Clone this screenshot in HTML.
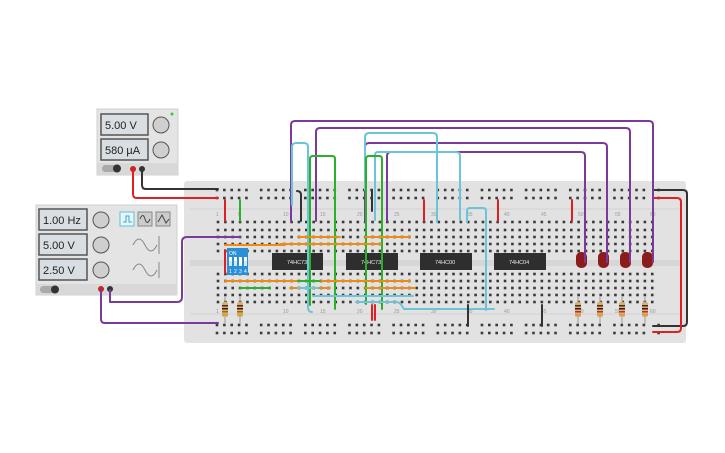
<!DOCTYPE html>
<html><head><meta charset="utf-8"><style>
html,body{margin:0;padding:0;background:#fff;width:725px;height:453px;overflow:hidden}
svg{display:block}
text{font-family:"Liberation Sans",sans-serif}
</style></head><body>
<svg id="s" width="725" height="453" viewBox="0 0 725 453" xmlns="http://www.w3.org/2000/svg">
<rect x="184" y="181" width="502" height="162" rx="3" fill="#e2e2e2"/>
<line x1="190" y1="209" x2="680" y2="209" stroke="#d2d2d2"/>
<line x1="190" y1="314" x2="680" y2="314" stroke="#d2d2d2"/>
<rect x="190" y="260" width="490" height="6" fill="#d6d6d6"/>
<g id="holes" fill="#3a3a3a"></g>
<g font-size="5" fill="#999">
<text x="216" y="216">1</text><text x="238" y="216">5</text><text x="283" y="216">10</text><text x="320" y="216">15</text><text x="357" y="216">20</text><text x="394" y="216">25</text><text x="431" y="216">30</text><text x="467" y="216">35</text><text x="504" y="216">40</text><text x="541" y="216">45</text><text x="578" y="216">50</text><text x="615" y="216">55</text><text x="650" y="216">60</text>
<text x="216" y="313">1</text><text x="238" y="313">5</text><text x="283" y="313">10</text><text x="320" y="313">15</text><text x="357" y="313">20</text><text x="394" y="313">25</text><text x="431" y="313">30</text><text x="467" y="313">35</text><text x="504" y="313">40</text><text x="541" y="313">45</text><text x="578" y="313">50</text><text x="615" y="313">55</text><text x="650" y="313">60</text>
</g>

<rect x="97" y="109" width="81" height="66" fill="#e4e4e4" stroke="#cfcfcf"/>
<rect x="101" y="114" width="47" height="21" fill="#d9dee2" stroke="#555" stroke-width="1.5"/>
<text x="105" y="129" font-size="11" fill="#222">5.00 V</text>
<rect x="101" y="139" width="47" height="21" fill="#d9dee2" stroke="#555" stroke-width="1.5"/>
<text x="105" y="154" font-size="11" fill="#222">580 µA</text>
<circle cx="161" cy="125" r="8" fill="#cfcfcf" stroke="#555"/>
<circle cx="161" cy="150" r="8" fill="#cfcfcf" stroke="#555"/>
<circle cx="172" cy="114" r="1.5" fill="#3c3"/>
<rect x="97" y="163" width="81" height="12" fill="#d8d8d8"/>
<rect x="102" y="165" width="18" height="7" rx="3.5" fill="#aaa"/><circle cx="117" cy="168.5" r="4" fill="#333"/>
<circle cx="133" cy="169" r="3" fill="#c22"/><circle cx="142" cy="169" r="3" fill="#333"/>

<rect x="36" y="205" width="141" height="90" fill="#e4e4e4" stroke="#cfcfcf"/>
<rect x="39" y="209" width="48" height="21" fill="#d9dee2" stroke="#555" stroke-width="1.5"/>
<text x="43" y="224" font-size="11" fill="#222">1.00 Hz</text>
<rect x="39" y="234" width="48" height="21" fill="#d9dee2" stroke="#555" stroke-width="1.5"/>
<text x="43" y="249" font-size="11" fill="#222">5.00 V</text>
<rect x="39" y="259" width="48" height="21" fill="#d9dee2" stroke="#555" stroke-width="1.5"/>
<text x="43" y="274" font-size="11" fill="#222">2.50 V</text>
<circle cx="101" cy="220" r="8" fill="#cfcfcf" stroke="#555"/>
<circle cx="101" cy="245" r="8" fill="#cfcfcf" stroke="#555"/>
<circle cx="101" cy="270" r="8" fill="#cfcfcf" stroke="#555"/>
<rect x="120" y="212" width="14" height="14" fill="#e8f6fb" stroke="#5bc0de"/>
<path d="M123 222h3v-6h3v6h3" stroke="#3aa6cf" fill="none"/>
<rect x="138" y="212" width="14" height="14" fill="#ccc" stroke="#888"/>
<path d="M140 219q3-7 5 0t5 0" stroke="#444" fill="none"/>
<rect x="156" y="212" width="14" height="14" fill="#ccc" stroke="#888"/>
<path d="M158 222l4-7 4 8 3-4" stroke="#444" fill="none"/>
<path d="M133 245q6-12 12 0t12 0" stroke="#888" fill="none"/><line x1="159" y1="236" x2="159" y2="254" stroke="#888"/>
<path d="M133 270q6-12 12 0t12 0" stroke="#888" fill="none"/><line x1="159" y1="262" x2="159" y2="278" stroke="#888"/>
<rect x="36" y="284" width="141" height="11" fill="#d8d8d8"/>
<rect x="40" y="286" width="18" height="7" rx="3.5" fill="#aaa"/><circle cx="55" cy="289.5" r="4" fill="#333"/>
<circle cx="101" cy="289" r="3" fill="#c22"/><circle cx="110" cy="289" r="3" fill="#333"/>

<g font-size="5.5" fill="#eee" font-family="Liberation Mono">
<rect x="272" y="253" width="51" height="17" fill="#2e2e2e"/><text x="287" y="264">74HC73</text>
<rect x="346" y="253" width="52" height="17" fill="#2e2e2e"/><text x="361" y="264">74HC73</text>
<rect x="420" y="253" width="52" height="17" fill="#2e2e2e"/><text x="435" y="264">74HC00</text>
<rect x="494" y="253" width="52" height="17" fill="#2e2e2e"/><text x="509" y="264">74HC04</text>
</g>
<rect x="227" y="248" width="21" height="27" fill="#2a8fd6"/>
<text x="229" y="255" font-size="5" fill="#fff">ON</text>
<g fill="#fff"><rect x="229" y="257" width="3" height="9"/><rect x="234" y="257" width="3" height="9"/><rect x="239" y="257" width="3" height="9"/><rect x="244" y="257" width="3" height="9"/></g>
<g fill="#cfe8ff"><rect x="229" y="261" width="3" height="5"/><rect x="234" y="261" width="3" height="5"/><rect x="244" y="261" width="3" height="5"/></g>
<g font-size="5" fill="#fff"><text x="229" y="273">1</text><text x="234" y="273">2</text><text x="239" y="273">3</text><text x="244" y="273">4</text></g>

<g fill="#8c1c1c"><rect x="576" y="252" width="11" height="16" rx="5"/><rect x="598" y="252" width="11" height="16" rx="5"/><rect x="620" y="252" width="11" height="16" rx="5"/><rect x="642" y="252" width="11" height="16" rx="5"/></g>
<g id="res"></g>

<g fill="none" stroke-width="2" stroke-linecap="round" stroke-linejoin="round">
<path d="M133 170v24q0 4 4 4h81" stroke="#e02020"/>
<path d="M142 170v15q0 4 4 4h72" stroke="#333"/>
<path d="M101 290v29q0 4 4 4h113" stroke="#7a3a9a"/>
<path d="M110 290v12h67q5 0 5-5v-55q0-5 5-5h53" stroke="#7a3a9a"/>
<line x1="225" y1="200" x2="225" y2="221" stroke="#e02020"/>
<line x1="240" y1="200" x2="240" y2="221" stroke="#2ab02a"/>
<line x1="225" y1="250" x2="225" y2="273" stroke="#e02020"/>
<path d="M653 190h30q4 0 4 4v128q0 4-4 4h-30" stroke="#333"/>
<path d="M653 198h24q4 0 4 4v126q0 4-4 4h-24" stroke="#e02020"/>
<path d="M291 221v-96q0-4 4-4h354q4 0 4 4v137" stroke="#7a3a9a"/>
<path d="M316 221v-89q0-4 4-4h306q4 0 4 4v130" stroke="#7a3a9a"/>
<path d="M365 221v-74q0-4 4-4h234q4 0 4 4v115" stroke="#7a3a9a"/>
<path d="M387 221v-65q0-4 4-4h190q4 0 4 4v106" stroke="#7a3a9a"/>
<path d="M292 205v-58q0-4 4-4h8q4 0 4 4v160q0 5 4 5" stroke="#6cc4d8"/>
<path d="M365 190v-53q0-4 4-4h64q4 0 4 4v85" stroke="#6cc4d8"/>
<path d="M375 220v-65q0-3 3-3h78q4 0 4 4v64" stroke="#6cc4d8"/>
<path d="M297 191q4 0 4 4v26" stroke="#333"/>
<path d="M310 305v-146q0-3 3-3h19q3 0 3 3v150" stroke="#2ab02a"/>
<path d="M366 304v-145q0-3 3-3h10q3 0 3 3v150" stroke="#2ab02a"/>
<line x1="372" y1="190" x2="372" y2="211" stroke="#333"/>
<line x1="424" y1="200" x2="424" y2="221" stroke="#e02020"/>
<line x1="498" y1="200" x2="498" y2="221" stroke="#e02020"/>
<path d="M467 222v-11q0-3 3-3h13q3 0 3 3v99" stroke="#6cc4d8"/>
<path d="M313 296h100" stroke="#6cc4d8"/>
<path d="M356 302h40q4 0 6 4l2 3h90" stroke="#6cc4d8"/>
<path d="M298 237h42M365 237h45M280 244h40M307 244h40M225 245h60M335 244h46" stroke="#f08a10"/>
<path d="M225 281h115M320 281h90M290 288h40M365 288h50" stroke="#f08a10"/>
<path d="M240 288h30M298 281h22" stroke="#2ab02a"/>
<path d="M298 288h20" stroke="#6cc4d8"/>
<line x1="375" y1="305" x2="375" y2="320" stroke="#e02020"/>
<line x1="372" y1="305" x2="372" y2="320" stroke="#e02020"/>
<line x1="468" y1="305" x2="468" y2="326" stroke="#333"/>
<line x1="542" y1="305" x2="542" y2="326" stroke="#333"/>
<line x1="572" y1="200" x2="572" y2="221" stroke="#e02020"/>
</g>
</svg>
<script>
var g=document.getElementById('holes'),s='';
function X(c){return 218+(c-1)*7.36}
var rows=[222,230,237,244,251,274,281,288,295,302];
for(var c=1;c<=60;c++)for(var r=0;r<10;r++)s+='<rect x="'+(X(c)-1.3)+'" y="'+(rows[r]-1.3)+'" width="2.6" height="2.6"/>';
for(var c=1;c<=61;c++){if((c+5)%6==5)continue;var x=X(c)-1;[190,198,325,333].forEach(function(y){s+='<rect x="'+(x-1.3)+'" y="'+(y-1.3)+'" width="2.6" height="2.6"/>'});}
g.innerHTML=s;
var rs='',xs=[225,240,578,600,622,645];
xs.forEach(function(x){rs+='<line x1="'+x+'" y1="297" x2="'+x+'" y2="324" stroke="#999" stroke-width="1"/><rect x="'+(x-3)+'" y="302" width="6" height="15" rx="2" fill="#d9b070"/><rect x="'+(x-3)+'" y="305" width="6" height="1.5" fill="#522"/><rect x="'+(x-3)+'" y="308" width="6" height="1.5" fill="#222"/><rect x="'+(x-3)+'" y="311" width="6" height="1.5" fill="'+(x>500?'#d22':'#a60')+'"/><rect x="'+(x-3)+'" y="314" width="6" height="1.5" fill="#c9a040"/>'});
document.getElementById('res').innerHTML=rs;
</script>
</body></html>
